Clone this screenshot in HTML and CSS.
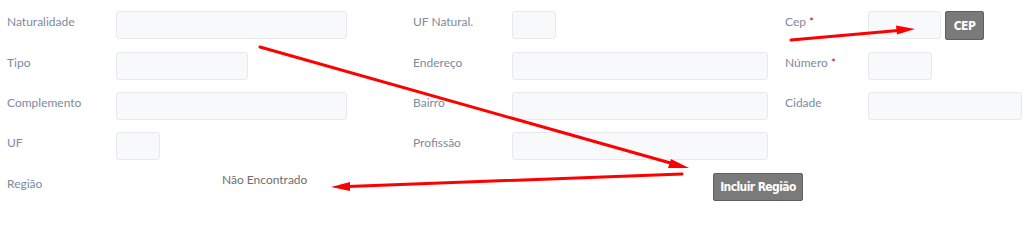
FILE: index.html
```html
<!DOCTYPE html>
<html lang="pt-BR">
<head>
<meta charset="utf-8">
<title>Cadastro</title>
<link rel="stylesheet" href="styles.css">
</head>
<body>
<div class="page">
  <form class="form">
    <label class="lbl">Naturalidade</label>
    <div class="cell"><span class="inp w230"></span></div>
    <label class="lbl">UF Natural.</label>
    <div class="cell"><span class="inp w43"></span></div>
    <label class="lbl">Cep <span class="req">*</span></label>
    <div class="cell"><span class="inp w72"></span><span class="btn btn-cep">CEP</span></div>

    <label class="lbl">Tipo</label>
    <div class="cell"><span class="inp w131"></span></div>
    <label class="lbl">Endereço</label>
    <div class="cell"><span class="inp w255"></span></div>
    <label class="lbl">Número <span class="req">*</span></label>
    <div class="cell"><span class="inp w63"></span></div>

    <label class="lbl">Complemento</label>
    <div class="cell"><span class="inp w230"></span></div>
    <label class="lbl">Bairro</label>
    <div class="cell"><span class="inp w255"></span></div>
    <label class="lbl">Cidade</label>
    <div class="cell"><span class="inp w154"></span></div>

    <label class="lbl">UF</label>
    <div class="cell"><span class="inp w43"></span></div>
    <label class="lbl">Profissão</label>
    <div class="cell"><span class="inp w255"></span></div>
    <div class="cell"></div>
    <div class="cell"></div>

    <label class="lbl lbl-last">Região</label>
    <div class="cell cell-last"><span class="result">Não Encontrado</span></div>
    <div class="cell"></div>
    <div class="cell cell-last"><span class="btn btn-inc">Incluir Região</span></div>
  </form>
  <svg class="arrows" width="1024" height="208" viewBox="0 0 1024 208">
    <g stroke="#ff0000" stroke-width="3" stroke-linecap="round" fill="none">
      <line x1="260" y1="47" x2="674" y2="164"/>
      <line x1="682" y1="174" x2="348" y2="186.5"/>
      <line x1="791" y1="40" x2="898" y2="30.5"/>
    </g>
    <g fill="#ff0000">
      <polygon points="689,168 671,159 668,168"/>
      <polygon points="331,187 350,182 350,191"/>
      <polygon points="915,29 896,25.5 897,34.5"/>
    </g>
  </svg>
</div>
</body>
</html>
```
FILE: styles.css
```css
html, body {
  margin: 0;
  padding: 0;
  background: #ffffff;
}
.page {
  position: relative;
  width: 1024px;
  height: 208px;
  overflow: hidden;
  font-family: "Lato", "Open Sans", sans-serif;
  font-size: 12px;
}
.form {
  display: grid;
  grid-template-columns: 109px 297px 99px 273px 83px 156px;
  grid-template-rows: 41px 40px 40px 40px 40px;
  padding: 11px 0 0 7px;
}
.lbl {
  color: #7d8aa0;
  line-height: 20px;
  padding-top: 1px;
  white-space: nowrap;
}
.req {
  color: #b22222;
}
.cell {
  display: flex;
  align-items: flex-start;
  gap: 4px;
}
.inp {
  display: block;
  flex-shrink: 0;
  height: 26px;
  background: #f8f9fb;
  border: 1px solid #e7e9ee;
  border-radius: 3px;
  box-sizing: content-box;
}
.w43 { width: 42px; }
.w63 { width: 62px; }
.w72 { width: 71px; }
.w131 { width: 130px; }
.w154 { width: 152px; }
.w230 { width: 229px; }
.w255 { width: 254px; }
.btn {
  display: inline-flex;
  flex-shrink: 0;
  align-items: center;
  justify-content: center;
  white-space: nowrap;
  background: #7a7a7a;
  border: 1px solid #5f5f5f;
  border-radius: 2px;
  color: #ffffff;
  font-family: "DejaVu Sans", "Liberation Sans", sans-serif;
  font-stretch: condensed;
  font-weight: bold;
  font-size: 12px;
  letter-spacing: -0.6px;
  box-sizing: border-box;
}
.btn-cep {
  width: 39px;
  height: 29px;
}
.btn-inc {
  width: 90px;
  height: 28px;
  margin-left: 201px;
  margin-top: 1px;
}
.lbl-last {
  padding-top: 2px;
}
.result {
  color: #6e6e6e;
  margin-left: 106px;
  line-height: 14px;
  margin-top: 1px;
}
.arrows {
  position: absolute;
  left: 0;
  top: 0;
  pointer-events: none;
}
```
